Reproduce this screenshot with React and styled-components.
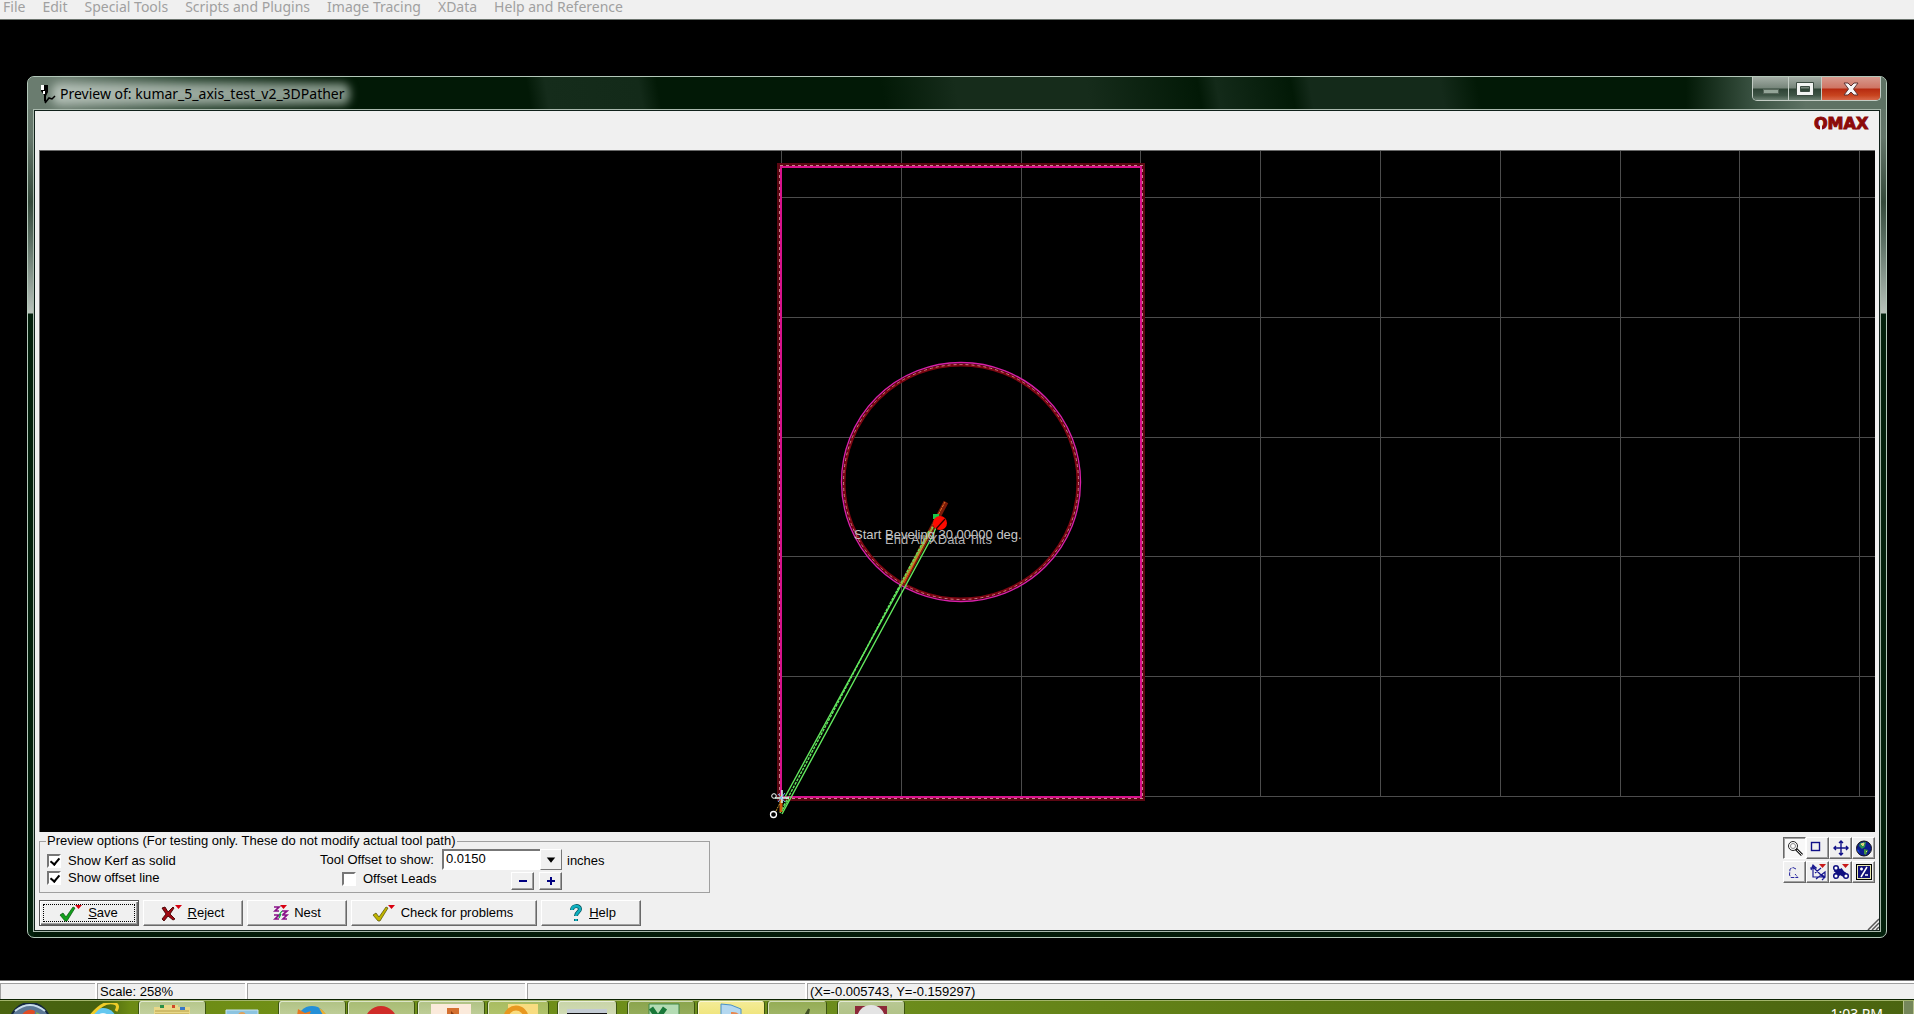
import React from 'react';
import styled, { createGlobalStyle } from 'styled-components';

const sans = '"Liberation Sans", Arial, sans-serif';
const segoe = '"Noto Sans", "Open Sans", sans-serif';

const GlobalStyle = createGlobalStyle`
    *{
        box-sizing: border-box;
    }
    body{
        margin: 0;
        background: #000;
        font-family: ${sans};
        font-size: 13px;
        line-height: 16px;
        color: #000;
    }
    button, select, input{
        font: inherit;
        color: inherit;
        margin: 0;
        padding: 0;
        border-radius: 0;
    }
`

const Page = styled.div`
    display: flex;
    flex-direction: column;
    height: 100vh;
    overflow: hidden;
`

const MenuBar = styled.nav`
    display: flex;
    gap: 17px;
    height: 20px;
    padding-left: 3px;
    background: #f0f0f0;
    border-bottom: 1px solid #6c746e;
    a{
        font-family: ${segoe};
        font-size: 14px;
        line-height: 14px;
        color: #a0a0a0;
        text-decoration: none;
        white-space: nowrap;
    }
`

const Desktop = styled.main`
    flex: 1;
    min-height: 0;
    display: flex;
    padding: 56px 27px 42px;
`

const Window = styled.section`
    flex: 1;
    min-width: 0;
    display: flex;
    flex-direction: column;
    padding: 0 5px 5px;
    border: 1px solid #b4c8ba;
    border-radius: 7px;
    background:
        linear-gradient(#6a7c6f 0, #64766a 60px, #34493a 125px, #5c7064 165px, #b8c2bb 236px, #03200c 237px) left / 6px 100% no-repeat,
        linear-gradient(#5e7264 0, #64766a 60px, #34493a 125px, #5c7064 165px, #b8c2bb 236px, #03200c 237px) right / 6px 100% no-repeat,
        #021a08;
`

const TitleBar = styled.header`
    position: relative;
    flex: none;
    display: flex;
    align-items: center;
    height: 32px;
    margin: 0 -5px;
    padding-top: 2px;
    border-radius: 6px 6px 0 0;
    background:
        linear-gradient(90deg, #6a7c6f 0, #6a7c6f 40px, #2c4633 160px, transparent 300px),
        linear-gradient(270deg, #5e7264 0, #5e7264 80px, #3c5444 130px, transparent 200px),
        linear-gradient(80deg, transparent 27%, #152c1b 28%, #132a19 33%, transparent 34%, transparent 46%, #162c1b 50%, #162c1b 57%, transparent 63%, #132a19 64%, transparent 68%, #142a1a 69%, #142a1a 76%, transparent 78%),
        #021906;
`

const Title = styled.h1`
    position: relative;
    z-index: 0;
    margin: 0 0 0 4px;
    font-family: ${segoe};
    font-size: 14px;
    font-weight: normal;
    line-height: 20px;
    white-space: nowrap;
    &::before{
        content: "";
        position: absolute;
        z-index: -1;
        inset: -1px -5px -1px -8px;
        border-radius: 8px;
        background: linear-gradient(90deg, #b3bfb6, #98a79c 50%, #819385);
        filter: blur(4px);
    }
`

const TitleIcon = styled.svg`
    flex: none;
    position: relative;
    z-index: 1;
    width: 16px;
    height: 22px;
    margin-left: 12px;
`

const WindowControls = styled.div`
    position: absolute;
    top: 0;
    right: 5px;
    display: flex;
    border: 1px solid #c3cdc5;
    border-top: 0;
    border-radius: 0 0 5px 5px;
    overflow: hidden;
`

const ControlButton = styled.button`
    display: grid;
    place-items: center;
    width: ${p => p.$width}px;
    height: 23px;
    border: 0;
    border-left: ${p => p.$first ? '0' : '1px solid #c3cdc5'};
    background: ${p => p.$danger
        ? 'linear-gradient(#d79a8e, #cf7463 48%, #b62a10 52%, #c8441f 80%, #d8684a)'
        : 'linear-gradient(#a3ada5, #76857a 48%, #2e4335 52%, #3f5546 80%, #6c7f72)'};
`

const Client = styled.div`
    position: relative;
    flex: 1;
    min-height: 0;
    display: flex;
    flex-direction: column;
    padding: 1px 5px 0;
    border: 1px solid #a9b9ad;
    box-shadow: inset 0 0 0 1px #10201a;
    background: #f0f0f0;
`

const Brand = styled.div`
    flex: none;
    height: 39px;
    padding: 4px 3px 0 0;
    text-align: right;
    svg{
        width: 60px;
        height: 16px;
    }
`

const Viewport = styled.div`
    flex: 1;
    min-height: 0;
    border: 1px solid #696969;
    border-width: 1px 0 0 1px;
    background: #000;
    svg{
        display: block;
        width: 100%;
        height: 100%;
    }
`

const Footer = styled.div`
    flex: none;
    display: flex;
    justify-content: space-between;
    align-items: flex-start;
    height: 99px;
    padding-top: 1px;
`

const Options = styled.fieldset`
    display: grid;
    grid-template-columns: 273px 242px auto;
    width: 671px;
    height: 60px;
    margin: 0;
    padding: 0 7px;
    border: 1px solid #a0a0a0;
    legend{
        padding: 0 1px;
        margin-left: -1px;
        line-height: 16px;
        white-space: nowrap;
    }
`

const CheckList = styled.div`
    padding-top: 3px;
`

const CheckLabel = styled.label`
    display: flex;
    align-items: center;
    gap: 7px;
    height: 17px;
    white-space: nowrap;
`

const CheckBox = styled.input`
    appearance: none;
    position: relative;
    width: 14px;
    height: 14px;
    border: 2px solid;
    border-color: #777 #fff #fff #777;
    background: #fff;
    &:checked::after{
        content: "";
        position: absolute;
        left: 3px;
        top: 0;
        width: 4px;
        height: 7px;
        border: solid #000;
        border-width: 0 2px 2px 0;
        transform: rotate(40deg);
    }
`

const Field = styled.div`
    display: flex;
    align-items: ${p => p.$align || 'center'};
    height: ${p => p.$height || 21}px;
    white-space: nowrap;
    padding-left: ${p => p.$indent || 0}px;
`

const SelectBox = styled.div`
    position: relative;
    margin-left: auto;
    width: 120px;
    height: 21px;
    select{
        appearance: none;
        width: 100%;
        height: 100%;
        padding: 0 24px 1px 2px;
        border: 2px solid;
        border-color: #777 #fff #fff #777;
        background: #fff;
    }
    svg{
        position: absolute;
        right: 0;
        top: 0;
        width: 22px;
        height: 21px;
        border: 1px solid;
        border-color: #fff #777 #777 #fff;
        background: #f0f0f0;
        pointer-events: none;
    }
`

const raised = `
    border: 1px solid;
    border-color: #fff #696969 #696969 #fff;
    box-shadow: inset -1px -1px 0 #a0a0a0;
    background: #f0f0f0;
`

const StepButton = styled.button`
    ${raised}
    display: grid;
    place-items: center;
    align-self: flex-end;
    width: 23px;
    height: 18px;
    margin-left: ${p => p.$push ? 'auto' : '5px'};
`

const Actions = styled.div`
    display: flex;
    gap: 4px;
    margin-top: 7px;
`

const ActionButton = styled.button`
    ${raised}
    display: flex;
    align-items: center;
    justify-content: center;
    gap: ${p => p.$gap || 6}px;
    width: ${p => p.$width || 100}px;
    height: 26px;
    padding-right: ${p => p.$focused ? 2 : 4}px;
    white-space: nowrap;
    ${p => p.$focused && `
        border-color: #555;
        box-shadow: inset 1px 1px 0 #fff, inset -1px -1px 0 #696969, inset -2px -2px 0 #a0a0a0;
        outline: 1px dotted #000;
        outline-offset: -5px;
    `}
    svg{
        flex: none;
        width: 24px;
        height: 18px;
    }
`

const Tools = styled.div`
    display: grid;
    grid-template-columns: repeat(4, 23px);
    gap: 2px 0;
    margin-top: 4px;
`

const ToolButton = styled.button`
    ${raised}
    height: 22px;
    ${p => p.$pressed && `
        border-color: #696969 #fff #fff #696969;
        box-shadow: inset 1px 1px 0 #a0a0a0;
        background: #f8f8f8;
    `}
    svg{
        display: block;
        width: 20px;
        height: 18px;
    }
`

const Grip = styled.svg`
    position: absolute;
    right: 1px;
    bottom: 1px;
    width: 12px;
    height: 12px;
`

const StatusBar = styled.footer`
    display: flex;
    gap: 2px;
    height: 20px;
    padding-top: 2px;
    border-top: 1px solid #777;
    border-bottom: 1px solid #0d2403;
    background: #fff;
`

const StatusCell = styled.div`
    flex: ${p => p.$width ? `0 0 ${p.$width}px` : '1'};
    padding-left: 2px;
    border: solid #a0a0a0;
    border-width: 1px 0 0 1px;
    background: #f0f0f0;
    white-space: nowrap;
`

const TaskBar = styled.nav`
    position: relative;
    display: flex;
    align-items: flex-start;
    height: 14px;
    overflow: hidden;
    border-top: 1px solid #a3b56c;
    background: linear-gradient(90deg, #4a6410 0, #466210 100px, #6c8a14 130px, #708f16 280px, #6c8c1c 900px, #5c7a14 1300px, #4a6410 100%);
`

const TaskButton = styled.button`
    flex: none;
    display: grid;
    justify-items: center;
    align-items: start;
    width: ${p => p.$width}px;
    height: 40px;
    margin-left: ${p => p.$gap || 0}px;
    padding-top: 2px;
    border: ${p => p.$tone ? '1px solid #3c5410' : '0'};
    border-top: 0;
    border-radius: 3px 3px 0 0;
    box-shadow: ${p => p.$tone ? 'inset 1px 1px 0 rgba(255, 255, 255, 0.6)' : 'none'};
    background: ${p => p.$tone || 'none'};
    overflow: hidden;
    svg{
        width: 48px;
        height: 36px;
    }
`

const Clock = styled.time`
    margin: 5px 20px 0 auto;
    font-family: ${segoe};
    font-size: 14px;
    line-height: 16px;
    color: #fff;
`

const ShowDesktop = styled.button`
    width: 11px;
    height: 40px;
    border: 1px solid #b5c18c;
    border-top: 0;
    background: #75875a;
`

const CELL = 119.8;
const range = n => Array.from({ length: n }, (_, i) => i);

const Grid = () => (
    <g stroke="#4c4c4c" shapeRendering="crispEdges" transform="translate(0.5 -0.5)">
        {range(20).map(i => <line key={i} x1={i * CELL} x2={i * CELL} y1="-1400" y2="0" />)}
        {range(12).map(i => <line key={i} x1="0" x2="2400" y1={-i * CELL} y2={-i * CELL} />)}
    </g>
)

const ToolPath = () => (
    <svg role="img" aria-label="Tool path preview">
        <g transform="translate(741 646)" fill="none">
            <Grid />
            <g shapeRendering="crispEdges">
                <rect x="-2" y="-632" width="364" height="634" stroke="#5c0612" strokeWidth="4" />
                <rect x="-1.500" y="-631.500" width="363" height="633" stroke="#c8808a" strokeDasharray="3 3" />
                <rect x="0" y="-630" width="360" height="630" stroke="#d8128c" strokeWidth="2" />
            </g>

            <circle cx="180" cy="-315" r="117" stroke="#7c0612" strokeWidth="3" />
            <circle cx="180" cy="-315" r="117.500" stroke="#c8787e" strokeDasharray="3 3" />
            <circle cx="180" cy="-315" r="119.500" stroke="#d820a8" strokeWidth="1.400" />

            <path d="M121 -212L165 -295" stroke="#7c1a08" strokeWidth="5" />
            <path d="M120 -212L164 -295" stroke="#e07828" strokeDasharray="3 1" />
            <path d="M123 -214L152 -270" stroke="#ff4010" />
            <g stroke="#62e85e" strokeWidth="1.400">
                <path d="M4 0L152 -270" />
                <path d="M1 17L152 -262L156 -272" />
                <path d="M-1 16L104 -184L148 -266" strokeDasharray="3 1" />
            </g>
            <path d="M119 -210L151 -268" stroke="#c08a20" />
            <path d="M0 15V-2" stroke="#d05a10" strokeWidth="3" />
            <path d="M1 14L8 2" stroke="#62e85e" />
            <path d="M-5 14L0 4" stroke="#c8a030" strokeDasharray="2 1" />
            <path d="M-6 1H8M1 -7V6" stroke="#d8fff0" strokeWidth="1.500" />
            <path d="M-3 -3L4 5M4 -4L-3 5" stroke="#72b0ff" />
            <circle cx="-7" cy="-1" r="2.300" stroke="#fff" />
            <circle cx="-7.500" cy="17.500" r="3" stroke="#fff" strokeWidth="1.300" />
            <rect x="152" y="-283" width="6" height="5" fill="#18c848" />
            <text x="73" y="-258" fill="#c8c8c8" fontSize="13" fontFamily={sans}>Start Beveling 30.00000 deg.</text>
            <text x="104" y="-253" fill="#b4b4b4" fontSize="13" fontFamily={sans}>End All XData Tilts</text>
            <circle cx="159" cy="-274" r="7" fill="#ff0a00" />
            <path d="M155 -268L164 -278" stroke="#300" strokeWidth="1.300" />
        </g>
    </svg>
)

const SaveIcon = () => (
    <svg viewBox="0 0 24 18">
        <path d="M2 11L5 9L8 13L15 3L17 4L9 17H7Z" fill="#12a01c" stroke="#06500a" strokeWidth="0.700" />
        <path d="M17 1H24L20.500 5Z" fill="#d80010" />
    </svg>
)

const CheckIcon = () => (
    <svg viewBox="0 0 24 18">
        <path d="M2 11L5 9L8 13L15 3L17 4L9 17H7Z" fill="#c0b400" stroke="#504a00" strokeWidth="0.700" />
        <path d="M17 1H24L20.500 5Z" fill="#d80010" />
    </svg>
)

const RejectIcon = () => (
    <svg viewBox="0 0 24 18">
        <path d="M4 4L7 3L10 8L15 3L16 4L12 10L17 15L15 16L10 12L6 17L4 15L8 10Z" fill="#a00812" stroke="#400" strokeWidth="0.900" />
        <path d="M17 1H24L20.500 5Z" fill="#d80010" />
    </svg>
)

const NestIcon = () => (
    <svg viewBox="0 0 24 18" fill="none" stroke="#881088" strokeWidth="1.700">
        <path d="M5 3H10L6 7H10M5 11H10L6 15H10M13 7H18L14 10.500M13 11H18L14 15H18" />
        <path d="M10 11L13 7M10 14L12 10" stroke="#10a040" strokeWidth="1.200" />
        <path d="M11 1H18L14.500 5Z" fill="#d80010" stroke="none" />
    </svg>
)

const HelpIcon = () => (
    <svg viewBox="0 0 24 18" fill="none">
        <path d="M10 6C10 1 18 1 18 5C18 8 14 8 14 12M14 15V17" stroke="#045058" strokeWidth="4" />
        <path d="M10 6C10 1 18 1 18 5C18 8 14 8 14 12M14 15V17" stroke="#10b0c0" strokeWidth="2.600" />
    </svg>
)

const toolIcons = [
    ['Zoom', <g fill="none" stroke="#222"><circle cx="9" cy="7" r="4.500" fill="#fff" /><circle cx="9" cy="7" r="2.500" stroke="#888" /><path d="M12 10L18 16" strokeWidth="3" /><path d="M13 11L18 16" stroke="#ddd" /></g>],
    ['Zoom window', <rect x="4.500" y="3.500" width="8" height="8" fill="none" stroke="#101088" strokeWidth="1.400" />],
    ['Pan', <path d="M11 2V16M4 9H18M9 4L11 2L13 4M9 14L11 16L13 14M6 7L4 9L6 11M16 7L18 9L16 11" fill="none" stroke="#101088" strokeWidth="1.400" />],
    ['Zoom extents', <g><circle cx="11" cy="9.500" r="7.500" fill="#0c1c8c" stroke="#111" /><path d="M7 4L13 3L12 8L9 10L6 7Z" fill="#2a9050" /><path d="M11 10L15 11L13 16L11 15Z" fill="#409040" /><path d="M8 5L11 4L10 7ZM13 12L14 13" fill="#d8c060" stroke="#e8d888" /><path d="M3 10L6 11L7 15" fill="#1c40d0" /></g>],
    ['Redraw', <path d="M12 6L9 4.500L6 6L5.500 12L7 14.500H14L11 11" fill="none" stroke="#2828a0" strokeDasharray="4 1" />],
    ['Show path', <g fill="none" stroke="#181890" strokeWidth="1.200"><path d="M3 5H10M6 2V14H18M6 4L17 15M8 10L14 5M9 16L18 9V14M4 7L6 2L9 5M15 12L18 14L15 17" /><path d="M12 1H19L15.500 5Z" fill="#c81818" stroke="none" /></g>],
    ['Find part', <g><path d="M5 6L15 12M5 13L13 7" stroke="#101080" strokeWidth="5" /><circle cx="6" cy="5" r="2.300" fill="#fff" stroke="#101080" strokeWidth="1.500" /><circle cx="6" cy="13" r="2.300" fill="#fff" stroke="#101080" strokeWidth="1.500" /><circle cx="16" cy="13" r="2.300" fill="#fff" stroke="#101080" strokeWidth="1.500" /><path d="M12 1H19L15.500 5Z" fill="#c81818" /></g>],
    ['Settings', <g><rect x="3.500" y="1.500" width="15" height="15" fill="#101078" stroke="#000" /><rect x="4.500" y="2.500" width="13" height="13" fill="none" stroke="#e8e8b0" /><path d="M8 14L14 4M7 6H10M8.500 4.500V7.500M12 12H15" stroke="#fff" strokeWidth="1.500" /></g>],
]

const tasks = [
    { name: 'Start', width: 60, icon: <g><circle cx="24" cy="20" r="20" fill="#5c7896" stroke="#14283c" strokeWidth="2" /><path d="M9 8Q24 -4 39 8" fill="none" stroke="#c8dcec" strokeWidth="2" /><path d="M14 14Q21 4 29 8L27 20Z" fill="#e04c24" /><path d="M30 9L36 12L32 22Z" fill="#84b44c" /></g> },
    { name: 'Internet Explorer', gap: 15, width: 60, icon: <g><circle cx="22" cy="19" r="14" fill="#64c8f0" /><path d="M15 16Q22 7 29 16" fill="none" stroke="#e8f8ff" strokeWidth="3" /><path d="M5 19Q22 -5 35 1Q38 3 35 8" fill="none" stroke="#f0cc28" strokeWidth="3" /></g> },
    { name: 'Explorer', gap: 3, width: 68, tone: 'linear-gradient(#b5c68a, #dce4c4)', icon: <g><path d="M6 4H16V2H30V4H42V30H6Z" fill="#e8d888" /><path d="M7 8H41M7 11H41" stroke="#b8a048" /><path d="M12 2H16V5H12Z" fill="#2c9048" /><path d="M24 2H27V5H24Z" fill="#d04828" /><path d="M32 4H37V7H32Z" fill="#3878c8" /></g> },
    { name: 'Pictures', width: 72, icon: <g><path d="M8 7H40V30H8Z" fill="#8cc4e0" stroke="#c8e4f0" /><circle cx="24" cy="13" r="4" fill="#e0a058" /></g> },
    { name: 'Firefox', width: 68, tone: 'linear-gradient(#b0c284, #d8e2bc)', icon: <g><circle cx="24" cy="18" r="15" fill="#2490d8" /><path d="M8 20L10 6L17 10L23 8L21 13L28 16Z" fill="#e87820" /><path d="M31 5Q39 8 40 18L35 12Z" fill="#f0b030" /></g> },
    { name: 'Recorder', gap: 1, width: 68, tone: 'linear-gradient(#a8bc74, #c8d6a0)', icon: <circle cx="24" cy="19" r="16" fill="#d02c28" /> },
    { name: 'Make', gap: 2, width: 68, tone: 'linear-gradient(#b0c284, #d8e2bc)', icon: <g><path d="M4 1H44V30H4Z" fill="#fbeadb" /><path d="M20 5H32V30H20Z" fill="#d47030" /><path d="M24 8L29 13H24Z" fill="#8c3c10" /></g> },
    { name: 'Outlook', gap: 2, width: 62, tone: 'linear-gradient(#a8bc60, #c0d080)', icon: <g><path d="M14 1H44V30H14Z" fill="#f8dc80" /><circle cx="22" cy="15" r="10" fill="none" stroke="#e89820" strokeWidth="5" /></g> },
    { name: 'Console', gap: 8, width: 60, tone: 'linear-gradient(#c8d4a8, #e0e8cc)', icon: <g><path d="M4 6H44V30H4Z" fill="#111" /><path d="M4 6H44V10H4Z" fill="#c4ccd4" /></g> },
    { name: 'Excel', gap: 10, width: 68, tone: 'linear-gradient(#8aa44c, #a8bc78)', icon: <g><path d="M12 1H42V30H12Z" fill="#b4dcb4" stroke="#408848" /><path d="M14 5L28 25M28 5L14 25" stroke="#187838" strokeWidth="5" /></g> },
    { name: 'Layout', gap: 2, width: 68, tone: 'linear-gradient(#f4ec98, #e8d84c)', icon: <g><path d="M14 1L24 2L34 6V12H30V28H14Z" fill="#b4d8f0" stroke="#4890c8" /><path d="M24 9Q34 8 34 18H24Z" fill="#e88850" /></g> },
    { name: 'Make path', gap: 2, width: 60, tone: 'linear-gradient(#94ac54, #b4c688)', icon: <path d="M10 12L14 16M30 16L36 6L34 16" stroke="#405024" strokeWidth="2" fill="none" /> },
    { name: 'Camera', gap: 10, width: 68, tone: 'linear-gradient(#b8c894, #a4b870)', icon: <g><path d="M8 3H40V30H8Z" fill="#8c2838" /><circle cx="24" cy="16" r="14" fill="#e4e4e4" /></g> },
]

const menus = ['File', 'Edit', 'Special Tools', 'Scripts and Plugins', 'Image Tracing', 'XData', 'Help and Reference']

const App = () => {

    return(
        <>
            <GlobalStyle/>
            <Page>
                <MenuBar>
                    {menus.map(name => <a href="#menu" key={name}>{name}</a>)}
                </MenuBar>
                <Desktop>
                    <Window>
                        <TitleBar>
                            <TitleIcon viewBox="0 0 16 22">
                                <path d="M1 2H8V9L6 13V20L4 18V12L1 8Z" fill="#000" />
                                <path d="M1 2H4V7H1ZM3 8H5V11H3Z" fill="#fff" />
                                <path d="M5 20L9 15L12 16L15 13" fill="none" stroke="#000" strokeWidth="1.500" />
                            </TitleIcon>
                            <Title>Preview of: kumar_5_axis_test_v2_3DPather</Title>
                            <WindowControls>
                                <ControlButton $first $width={35} aria-label="Minimize">
                                    <svg width="18" height="14"><rect x="1.500" y="7.500" width="15" height="4" fill="#94a598" stroke="#56665a" /></svg>
                                </ControlButton>
                                <ControlButton $width={33} aria-label="Maximize">
                                    <svg width="18" height="14"><path d="M0.500 0.500H17.500V13.500H0.500ZM4.500 4.500V9.500H13.500V4.500Z" fill="#f2f4f2" fillRule="evenodd" stroke="#3c4c42" /></svg>
                                </ControlButton>
                                <ControlButton $danger $width={59} aria-label="Close">
                                    <svg width="16" height="14"><path d="M1 1H5L8 4L11 1H15L10.500 7L15 13H11L8 10L5 13H1L5.500 7Z" fill="#f6f6f6" stroke="#5c3434" /></svg>
                                </ControlButton>
                            </WindowControls>
                        </TitleBar>
                        <Client>
                            <Brand>
                                <svg viewBox="0 0 60 16">
                                    <text x="2" y="14" fill="#8c0a0a" fontSize="16" fontWeight="bold" fontFamily='"DejaVu Sans", sans-serif' stroke="#8c0a0a">OMAX</text>
                                    <path d="M9 10V16" stroke="#f0f0f0" strokeWidth="2" />
                                </svg>
                            </Brand>
                            <Viewport>
                                <ToolPath/>
                            </Viewport>
                            <Footer>
                                <div>
                                    <Options>
                                        <legend>Preview options (For testing only. These do not modify actual tool path)</legend>
                                        <CheckList>
                                            <CheckLabel><CheckBox type="checkbox" defaultChecked/>Show Kerf as solid</CheckLabel>
                                            <CheckLabel><CheckBox type="checkbox" defaultChecked/>Show offset line</CheckLabel>
                                        </CheckList>
                                        <div>
                                            <Field>
                                                <label htmlFor="tool-offset">Tool Offset to show:</label>
                                                <SelectBox>
                                                    <select id="tool-offset">
                                                        <option>0.0150</option>
                                                    </select>
                                                    <svg viewBox="0 0 18 18"><path d="M5 7H13L9 12Z" /></svg>
                                                </SelectBox>
                                            </Field>
                                            <Field $indent={22} $height={20} $align="flex-start">
                                                <CheckLabel><CheckBox type="checkbox"/>Offset Leads</CheckLabel>
                                                <StepButton $push aria-label="Decrease offset">
                                                    <svg width="10" height="10"><path d="M1 5H9" stroke="#000080" strokeWidth="2" /></svg>
                                                </StepButton>
                                                <StepButton aria-label="Increase offset">
                                                    <svg width="10" height="10"><path d="M1 5H9M5 1V9" stroke="#000080" strokeWidth="2" /></svg>
                                                </StepButton>
                                            </Field>
                                        </div>
                                        <Field $indent={5} $height={24}>inches</Field>
                                    </Options>
                                    <Actions>
                                        <ActionButton $focused><SaveIcon/><span><u>S</u>ave</span></ActionButton>
                                        <ActionButton><RejectIcon/><span><u>R</u>eject</span></ActionButton>
                                        <ActionButton $gap={1}><NestIcon/>Nest</ActionButton>
                                        <ActionButton $width={186}><CheckIcon/>Check for problems</ActionButton>
                                        <ActionButton $gap={3}><HelpIcon/><span><u>H</u>elp</span></ActionButton>
                                    </Actions>
                                </div>
                                <Tools>
                                    {toolIcons.map(([name, icon], i) => (
                                        <ToolButton key={name} aria-label={name} $pressed={i === 0}>
                                            <svg viewBox="0 0 20 18">{icon}</svg>
                                        </ToolButton>
                                    ))}
                                </Tools>
                            </Footer>
                            <Grip viewBox="0 0 12 12">
                                <path d="M1 12L12 1M5 12L12 5M9 12L12 9" stroke="#555" strokeWidth="1.500" />
                            </Grip>
                        </Client>
                    </Window>
                </Desktop>
                <StatusBar>
                    <StatusCell $width={95}/>
                    <StatusCell $width={148}>Scale: 258%</StatusCell>
                    <StatusCell $width={278}/>
                    <StatusCell $width={278}/>
                    <StatusCell>(X=-0.005743, Y=-0.159297)</StatusCell>
                </StatusBar>
                <TaskBar>
                    {tasks.map(({ name, width, gap, tone, icon }) => (
                        <TaskButton key={name} aria-label={name} $width={width} $gap={gap} $tone={tone}>
                            <svg viewBox="0 0 48 36">{icon}</svg>
                        </TaskButton>
                    ))}
                    <Clock>1:03 PM</Clock>
                    <ShowDesktop aria-label="Show desktop"/>
                </TaskBar>
            </Page>
        </>
    )

}

export default App;
